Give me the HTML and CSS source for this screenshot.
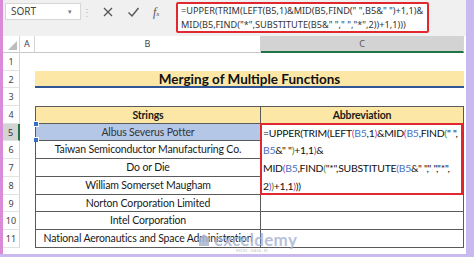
FILE: index.html
```html
<!DOCTYPE html>
<html>
<head>
    <meta charset="UTF-8">
    <title>Merging of Multiple Functions</title>
    <link rel="stylesheet" href="styles.css">
</head>
<body>
    <div class="frame">
        <div class="fbar">
            <div class="namebox">SORT <span class="caret">&#9662;</span></div>
            <div class="dots">&#8942;</div>
            <div class="tools">
                <svg width="12" height="12" viewBox="0 0 12 12"><path d="M2 2 L10 10 M10 2 L2 10" stroke="#555" stroke-width="1.3"/></svg>
                <svg width="13" height="12" viewBox="0 0 13 12"><path d="M1.5 6.5 L5 10 L11.5 2" stroke="#555" stroke-width="1.4" fill="none"/></svg>
                <span class="fx"><i>f</i><small>x</small></span>
            </div>
            <div class="formula">=UPPER(TRIM(LEFT(B5,1)&amp;MID(B5,FIND(" ",B5&amp;" ")+1,1)&amp;<br>MID(B5,FIND("*",SUBSTITUTE(B5&amp;" "," ","*",2))+1,1)))</div>
        </div>

        <div class="sheet">
            <div class="corner"><svg width="10" height="10" viewBox="0 0 10 10"><path d="M10 1 L10 10 L1 10 Z" fill="#bdbdbd"/></svg></div>
            <div class="ch">A</div>
            <div class="ch">B</div>
            <div class="ch active">C</div>

            <div class="rh">1</div><div class="gap"></div><div class="gap"></div><div class="gap"></div>

            <div class="rh">2</div><div class="gap"></div>
            <div class="title">Merging of Multiple Functions</div>

            <div class="rh">3</div><div class="gap"></div><div class="gap"></div><div class="gap"></div>

            <div class="rh">4</div><div class="gap"></div>
            <div class="cell head first top">Strings</div>
            <div class="cell head top">Abbreviation</div>

            <div class="rh active">5</div><div class="gap"></div>
            <div class="cell first sel">Albus Severus Potter<span class="handle h1"></span><span class="handle h2"></span></div>
            <div class="cell edit">
                <div class="editor">=UPPER(TRIM<span class="p1">(</span>LEFT<span class="p2">(</span><span class="ref">B5</span>,1<span class="p2">)</span>&amp;MID<span class="p2">(</span><span class="ref">B5</span>,FIND<span class="p3">(</span>" ",<br><span class="ref">B5</span>&amp;" "<span class="p3">)</span>+1,1<span class="p2">)</span>&amp;<br>MID<span class="p2">(</span><span class="ref">B5</span>,FIND<span class="p3">(</span>"*",SUBSTITUTE<span class="p4">(</span><span class="ref">B5</span>&amp;" "," ","*",<br>2<span class="p4">)</span><span class="p3">)</span>+1,1<span class="p2">)</span><span class="p1">)</span>)</div>
            </div>

            <div class="rh">6</div><div class="gap"></div>
            <div class="cell first">Taiwan Semiconductor Manufacturing Co.</div><div class="cell"></div>

            <div class="rh">7</div><div class="gap"></div>
            <div class="cell first">Do or Die</div><div class="cell"></div>

            <div class="rh">8</div><div class="gap"></div>
            <div class="cell first">William Somerset Maugham</div><div class="cell"></div>

            <div class="rh">9</div><div class="gap"></div>
            <div class="cell first">Norton Corporation Limited</div><div class="cell"></div>

            <div class="rh">10</div><div class="gap"></div>
            <div class="cell first">Intel Corporation</div><div class="cell"></div>

            <div class="rh">11</div><div class="gap"></div>
            <div class="cell first bottom">National Aeronautics and Space Administration</div><div class="cell bottom"></div>
        </div>

        <div class="mark">
            <svg width="16" height="14" viewBox="0 0 16 14"><path d="M8 1 L15 7 L13 7 L13 13 L3 13 L3 7 L1 7 Z" fill="#aab7d3"/></svg>
            <span>exceldemy</span>
            <small>EXCEL · DATA · BI</small>
        </div>
    </div>
</body>
</html>
```

FILE: styles.css
```css
body {
    margin: 0;
    width: 474px;
    height: 257px;
    overflow: hidden;
    background: #c9b9ee;
    font-family: Lato, "Open Sans", sans-serif;
}
.frame {
    position: relative;
    width: 463px;
    height: 254px;
    margin-left: 3px;
    background: #fff;
    box-shadow: -3px 0 0 #d98ad8;
}
.fbar {
    height: 36px;
    background: #f0f0f0;
    display: flex;
    align-items: flex-start;
    font-family: "Noto Sans", sans-serif;
}
.namebox {
    margin: 3px 0 0 2px;
    width: 76px;
    height: 17px;
    box-sizing: border-box;
    background: #fff;
    border: 1px solid #d6d6d6;
    font-size: 10px;
    color: #444;
    padding-left: 5px;
    line-height: 15px;
    position: relative;
}
.caret {
    position: absolute;
    right: 8px;
    font-size: 7px;
    color: #777;
}
.dots {
    width: 12px;
    text-align: center;
    color: #bbb;
    font-size: 10px;
    margin-top: 5px;
}
.tools {
    display: flex;
    align-items: center;
    gap: 13px;
    box-sizing: border-box;
    padding-left: 9px;
    margin-top: 5px;
    width: 83px;
    height: 14px;
}
.fx {
    font-family: "Liberation Serif", serif;
    color: #555;
    font-size: 12px;
}
.fx small {
    font-size: 7px;
    font-style: italic;
}
.formula {
    margin-top: 2px;
    width: 253px;
    height: 31px;
    box-sizing: border-box;
    background: #fff;
    border: 2px solid #e0282e;
    border-radius: 2px;
    font-size: 9.2px;
    line-height: 13.5px;
    padding: 0 0 0 3px;
    color: #333;
    white-space: nowrap;
}
.sheet {
    display: grid;
    grid-template-columns: 17px 15px 226px 203px;
    grid-template-rows: 17px repeat(11, 17.7px);
    font-size: 10.5px;
    letter-spacing: -0.15px;
}
.corner {
    background: #fff;
    border-right: 1px solid #d5d5d5;
    border-bottom: 1px solid #c8c8c8;
    display: flex;
    align-items: flex-end;
    justify-content: flex-end;
    padding: 0 2px 2px 0;
}
.ch {
    background: #fff;
    border-right: 1px solid #d5d5d5;
    border-bottom: 1px solid #c8c8c8;
    text-align: center;
    font-family: "Noto Sans", sans-serif;
    font-size: 9px;
    letter-spacing: 0;
    line-height: 16px;
    color: #444;
}
.ch.active {
    background: #d3d3d3;
    border-bottom: 2px solid #217346;
    color: #555;
}
.rh {
    border-right: 1px solid #d5d5d5;
    border-bottom: 1px solid #e2e2e2;
    font-family: "Noto Sans", sans-serif;
    font-size: 9px;
    letter-spacing: 0;
    color: #444;
    text-align: center;
    line-height: 17px;
}
.rh.active {
    background: #d3d3d3;
    border-right: 2px solid #217346;
    color: #333;
}
.title {
    grid-column: 3 / 5;
    background: #fde7a6;
    border-bottom: 2px solid #2f5597;
    font-weight: bold;
    font-size: 13.5px;
    letter-spacing: 0;
    text-align: center;
    line-height: 17px;
    color: #111;
}
.cell {
    position: relative;
    border-right: 1px solid #5a5a5a;
    border-bottom: 1px solid #5a5a5a;
    text-align: center;
    line-height: 17px;
    color: #1a1a1a;
    white-space: nowrap;
}
.cell.first {
    border-left: 1px solid #5a5a5a;
}
.cell.top {
    border-top: 1px solid #5a5a5a;
}
.cell.head {
    background: #fde7a6;
    font-weight: bold;
}
.cell.sel {
    background: #b4c7e7;
    color: #333;
}
.handle {
    position: absolute;
    left: -3px;
    width: 4px;
    height: 4px;
    background: #3b6fc4;
    border: 1px solid #fff;
}
.h1 { top: -3px; }
.h2 { bottom: -3px; }
.edit {
    z-index: 2;
}
.editor {
    position: absolute;
    left: -1px;
    top: -1px;
    width: 203px;
    height: 72px;
    box-sizing: border-box;
    background: #fff;
    border: 2px solid #e0282e;
    text-align: left;
    font-size: 10.4px;
    letter-spacing: -0.25px;
    line-height: 17.6px;
    padding: 0 0 0 1px;
    color: #111;
}
.ref { color: #4472c4; }
.p1 { color: #111; }
.p2 { color: #c03b9b; }
.p3 { color: #3a8a3a; }
.p4 { color: #8a4fbf; }
.mark {
    position: absolute;
    left: 193px;
    top: 229px;
    display: flex;
    align-items: center;
    gap: 2px;
    color: #aab7d3;
    opacity: 0.85;
}
.mark span {
    font-size: 17px;
    font-weight: bold;
    letter-spacing: 0.3px;
}
.mark small {
    position: absolute;
    left: 40px;
    top: 19px;
    font-size: 4px;
    color: #bbb;
}
```
